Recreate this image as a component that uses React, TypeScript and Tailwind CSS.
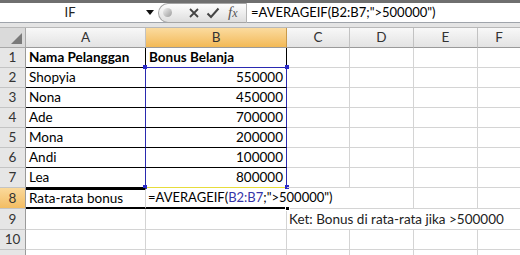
import type { ReactNode } from 'react';

const data = [
    { name: 'Shopyia', bonus: '550000' },
    { name: 'Nona', bonus: '450000' },
    { name: 'Ade', bonus: '700000' },
    { name: 'Mona', bonus: '200000' },
    { name: 'Andi', bonus: '100000' },
    { name: 'Lea', bonus: '800000' },
];

// gray gridline by default, each cell draws its own right/bottom edge
function Cell({ w, className = '', children }: { w: string; className?: string; children?: ReactNode }) {
    return (
        <div className={`relative h-full shrink-0 flex items-center whitespace-nowrap ${w} ${className}`}>
            {children}
        </div>
    );
}

function RowHead({ n, active }: { n?: number; active?: boolean }) {
    return (
        <div
            className={`h-full w-[26px] shrink-0 flex items-center justify-center border-r border-b border-r-[#9a9a9a] border-b-[#c4c4c4] text-[#333] ${
                active ? 'bg-gradient-to-b from-[#fad99a] to-[#f3bd62]' : 'bg-[#e6e6e6]'
            }`}
        >
            {n}
        </div>
    );
}

const grid = 'border-r border-b border-[#d4d4d4]';

function Dot({ className }: { className: string }) {
    return <div className={`absolute w-[4px] h-[4px] bg-[#2a2ac8] ${className}`} />;
}

export default function App() {
    return (
        <div className="w-[520px] h-[255px] overflow-hidden bg-white font-['Lato',sans-serif] text-[13.5px] text-black">
            <div className="h-[3px] bg-[#6f6f6f]" />

            {/* formula bar */}
            <div className="h-[20px] flex items-center bg-white border-b border-[#9fa4ab]">
                <div className="w-[140px] text-center text-[13px] text-[#222]">IF</div>
                <svg width="8" height="5" viewBox="0 0 8 5" className="ml-[6px]">
                    <polygon points="0,0 8,0 4,5" fill="#111" />
                </svg>
                <div className="ml-[4px] h-[20px] w-[88px] flex items-center rounded-l-full border border-r-0 border-[#a5a5a5] bg-gradient-to-b from-[#fdfdfd] to-[#dedede]">
                    <div className="ml-[4px] w-[9px] h-[9px] rounded-full bg-gradient-to-br from-[#f2f2f2] to-[#9b9b9b]" />
                    <svg width="12" height="12" viewBox="0 0 12 12" className="ml-[16px]">
                        <path d="M2 2 L10 10 M10 2 L2 10" stroke="#444" strokeWidth="1.8" />
                    </svg>
                    <svg width="14" height="12" viewBox="0 0 14 12" className="ml-[6px]">
                        <path d="M1.5 6.5 L5 10 L12.5 1.5" stroke="#444" strokeWidth="2" fill="none" />
                    </svg>
                    <span className="ml-[8px] font-['Liberation_Serif',serif] italic text-[15px] text-[#555] leading-none">
                        f<span className="text-[12px]">x</span>
                    </span>
                </div>
                <div className="h-[20px] w-px bg-[#b5b5b5]" />
                <div className="pl-[4px] text-[13px] whitespace-nowrap">=AVERAGEIF(B2:B7;"&gt;500000")</div>
            </div>
            <div className="h-[5px] bg-[#e4e4e4] border-b border-[#b8b8b8]" />

            {/* column headers */}
            <div className="h-[20px] flex text-[#333]">
                <div className="h-full w-[26px] shrink-0 flex items-end justify-end bg-[#dadada] border-r border-b border-[#a8a8a8] p-[3px]">
                    <svg width="11" height="11" viewBox="0 0 11 11">
                        <polygon points="11,0 11,11 0,11" fill="#7a7a7a" />
                    </svg>
                </div>
                <Cell w="w-[120px]" className="justify-center bg-gradient-to-b from-[#f8f8f8] to-[#e3e3e3] border-r border-b border-r-[#c2c2c2] border-b-[#9a9a9a]">A</Cell>
                <Cell w="w-[141px]" className="justify-center bg-gradient-to-b from-[#fbdb9e] to-[#f2b955] border-r border-b border-r-[#c99a4a] border-b-[#9a9a9a]">B</Cell>
                <Cell w="w-[63px]" className="justify-center bg-gradient-to-b from-[#f8f8f8] to-[#e3e3e3] border-r border-b border-r-[#c2c2c2] border-b-[#9a9a9a]">C</Cell>
                <Cell w="w-[64px]" className="justify-center bg-gradient-to-b from-[#f8f8f8] to-[#e3e3e3] border-r border-b border-r-[#c2c2c2] border-b-[#9a9a9a]">D</Cell>
                <Cell w="w-[64px]" className="justify-center bg-gradient-to-b from-[#f8f8f8] to-[#e3e3e3] border-r border-b border-r-[#c2c2c2] border-b-[#9a9a9a]">E</Cell>
                <Cell w="w-[60px]" className="justify-center pr-[18px] bg-gradient-to-b from-[#f8f8f8] to-[#e3e3e3] border-b border-b-[#9a9a9a]">F</Cell>
            </div>

            {/* row 1 */}
            <div className="h-[20px] flex">
                <RowHead n={1} />
                <Cell w="w-[120px]" className="pl-[3px] font-bold border-r border-b border-black">Nama Pelanggan</Cell>
                <Cell w="w-[141px]" className="pl-[3px] font-bold border-r border-b border-r-black border-b-[#2a2ab0]">Bonus Belanja</Cell>
                <Cell w="w-[63px]" className={grid} />
                <Cell w="w-[64px]" className={grid} />
                <Cell w="w-[64px]" className={grid} />
                <Cell w="w-[60px]" className="border-b border-[#d4d4d4]" />
            </div>

            {/* rows 2-7 */}
            {data.map((row, i) => (
                <div key={row.name} className="h-[20px] flex">
                    <RowHead n={i + 2} />
                    <Cell w="w-[120px]" className="pl-[3px] border-r border-b border-r-[#2a2ab0] border-b-black">
                        {row.name}
                    </Cell>
                    <Cell
                        w="w-[141px]"
                        className={`justify-end pr-[3px] border-r border-b border-r-[#2a2ab0] ${
                            i === 5 ? 'border-b-[#e6dc3c]' : 'border-b-black'
                        }`}
                    >
                        {row.bonus}
                        {i === 0 && (
                            <>
                                <Dot className="left-[-3px] top-[-3px]" />
                                <Dot className="right-[-3px] top-[-3px]" />
                            </>
                        )}
                        {i === 5 && (
                            <>
                                <Dot className="left-[-3px] bottom-[-2px]" />
                                <Dot className="right-[-3px] bottom-[-2px]" />
                            </>
                        )}
                    </Cell>
                    <Cell w="w-[63px]" className={grid} />
                    <Cell w="w-[64px]" className={grid} />
                    <Cell w="w-[64px]" className={grid} />
                    <Cell w="w-[60px]" className="border-b border-[#d4d4d4]" />
                </div>
            ))}

            {/* row 8 */}
            <div className="h-[21px] flex">
                <RowHead n={8} active />
                <Cell w="w-[120px]" className="pl-[3px] border-t-2 border-b-2 border-black border-r border-r-[#d4d4d4]">
                    Rata-rata bonus
                </Cell>
                <Cell w="w-[141px]" className="pl-[2px] text-[13px] border-b-2 border-black z-10">
                    <span>
                        =AVERAGEIF(<span className="text-[#3535a8]">B2:B7</span>;"&gt;500000")
                    </span>
                    <div className="absolute right-[-3px] bottom-[-4px] w-[5px] h-[5px] bg-black border border-white" />
                </Cell>
                <Cell w="w-[63px]" className="border-b border-[#d4d4d4]" />
                <Cell w="w-[64px]" className={grid} />
                <Cell w="w-[64px]" className={grid} />
                <Cell w="w-[60px]" className="border-b border-[#d4d4d4]" />
            </div>

            {/* row 9 */}
            <div className="h-[21px] flex">
                <RowHead n={9} />
                <Cell w="w-[120px]" className={grid} />
                <Cell w="w-[141px]" className={grid} />
                <Cell w="w-[63px]" className="pl-[2px] border-b border-[#d4d4d4] text-[#222] z-10">
                    Ket: Bonus di rata-rata jika &gt;500000
                </Cell>
                <Cell w="w-[64px]" className="border-b border-[#d4d4d4]" />
                <Cell w="w-[64px]" className="border-b border-[#d4d4d4]" />
                <Cell w="w-[60px]" className="border-b border-[#d4d4d4]" />
            </div>

            {/* row 10 */}
            <div className="h-[20px] flex">
                <RowHead n={10} />
                <Cell w="w-[120px]" className={grid} />
                <Cell w="w-[141px]" className={grid} />
                <Cell w="w-[63px]" className={grid} />
                <Cell w="w-[64px]" className={grid} />
                <Cell w="w-[64px]" className={grid} />
                <Cell w="w-[60px]" className="border-b border-[#d4d4d4]" />
            </div>

            {/* next row, only its top edge shows */}
            <div className="h-[20px] flex">
                <RowHead />
                <Cell w="w-[120px]" className={grid} />
                <Cell w="w-[141px]" className={grid} />
                <Cell w="w-[63px]" className={grid} />
                <Cell w="w-[64px]" className={grid} />
                <Cell w="w-[64px]" className={grid} />
                <Cell w="w-[60px]" className="border-b border-[#d4d4d4]" />
            </div>
        </div>
    );
}
